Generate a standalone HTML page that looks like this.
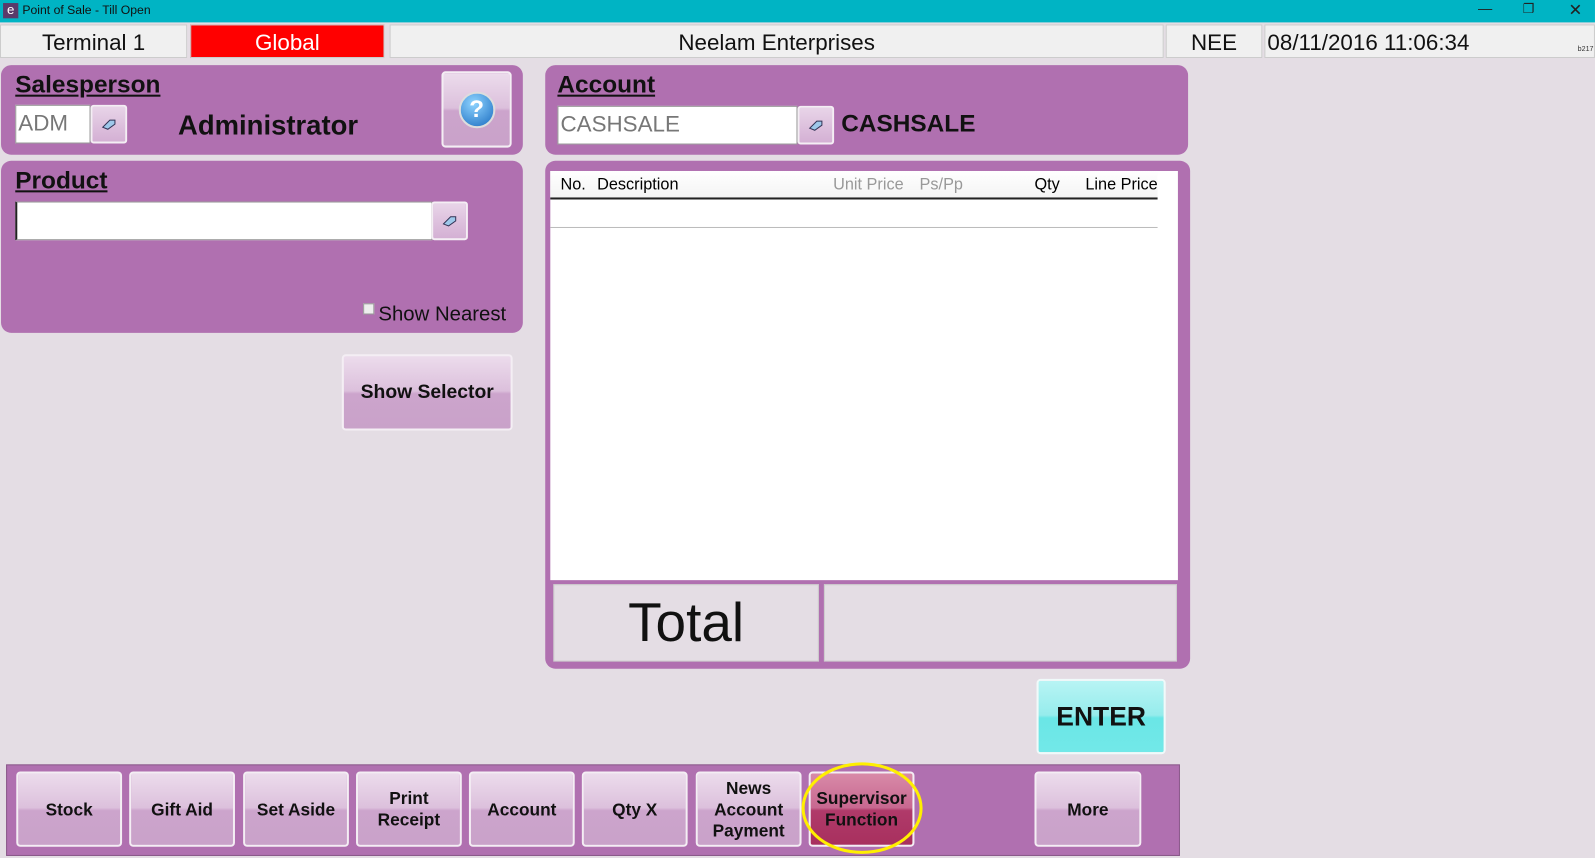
<!DOCTYPE html>
<html><head><meta charset="utf-8"><style>
*{box-sizing:border-box;margin:0;padding:0}
html,body{width:1595px;height:858px;overflow:hidden;background:#e4dde4;font-family:"Liberation Sans",sans-serif}
#w{position:absolute;left:0;top:0;width:1568px;height:843px;transform:scale(1.0172,1.0178);transform-origin:0 0}
.a{position:absolute}
.cell{position:absolute;top:24px;height:33px;background:#f0f0f0;border:1px solid #ccc;font-size:22px;line-height:33px;text-align:center;color:#111}
.pan{position:absolute;background:#b070b0;border-radius:10px}
.lbl{position:absolute;font-weight:bold;font-size:24px;text-decoration:underline;color:#111}
.btn{position:absolute;border:2px solid #f4eef4;border-radius:4px;background:linear-gradient(#ecdcec 0%,#dcc0dc 48%,#cca4cc 52%,#c9a2c9 100%);display:flex;align-items:center;justify-content:center;text-align:center;font-weight:bold;font-size:17px;color:#111;line-height:21px}
.inp{position:absolute;background:#fff;border:1px solid #999;font-size:22px;color:#777;padding-left:2px;line-height:34px}
.tag{position:absolute;width:36px;height:36px;border:2px solid #f4eef4;border-radius:3px;background:linear-gradient(#e8d4e8,#d4b0d4);display:flex;align-items:center;justify-content:center}
.hd{position:absolute;top:5px;font-size:16px}
</style></head><body><div id="w">
<div class="a" style="left:0;top:0;width:1568px;height:22px;background:#00b4c4"></div>
<div class="a" style="left:3px;top:3px;width:15px;height:15px;background:#5a3a6a;color:#fff;font-size:13px;line-height:14px;text-align:center">e</div>
<div class="a" style="left:22px;top:3px;font-size:12px;color:#111">Point of Sale - Till Open</div>
<div class="a" style="left:1453px;top:0;font-size:14px;color:#222">—</div>
<div class="a" style="left:1497px;top:1px;font-size:13px;color:#222">❐</div>
<div class="a" style="left:1542px;top:0;font-size:16px;color:#222">✕</div>
<div class="cell" style="left:0;width:184px">Terminal 1</div>
<div class="cell" style="left:187px;width:191px;background:#f00;color:#fff">Global</div>
<div class="cell" style="left:383px;width:761px">Neelam Enterprises</div>
<div class="cell" style="left:1146px;width:95px">NEE</div>
<div class="cell" style="left:1243px;width:325px;text-align:left;padding-left:2px">08/11/2016 11:06:34</div>
<div class="a" style="left:1551px;top:45px;font-size:7px;color:#333">b217</div>

<div class="pan" style="left:1px;top:64px;width:513px;height:88px"></div>
<div class="lbl" style="left:15px;top:70px">Salesperson</div>
<div class="inp" style="left:15px;top:103px;width:74px;height:38px">ADM</div>
<div class="tag" style="left:89px;top:103px;height:38px"><svg width="16" height="12"><path d="M2 9 L9 2 L14 2 L14 6 L7 11 Z" fill="#9ec8ea" stroke="#335" stroke-width="1"/></svg></div>
<div class="a" style="left:175px;top:108px;font-size:27px;font-weight:bold;color:#111">Administrator</div>
<div class="btn" style="left:434px;top:70px;width:69px;height:75px"><div style="width:36px;height:36px;border-radius:50%;background:radial-gradient(circle at 40% 30%,#8fd4ff,#1a6cc0);border:2px solid #ddd;color:#fff;font-size:24px;line-height:32px">?</div></div>

<div class="pan" style="left:1px;top:158px;width:513px;height:169px"></div>
<div class="lbl" style="left:15px;top:164px">Product</div>
<div class="inp" style="left:15px;top:198px;width:410px;height:38px;border-left:2px solid #222"></div>
<div class="tag" style="left:424px;top:198px;height:38px"><svg width="16" height="12"><path d="M2 9 L9 2 L14 2 L14 6 L7 11 Z" fill="#9ec8ea" stroke="#335" stroke-width="1"/></svg></div>
<div class="a" style="left:357px;top:298px;width:11px;height:11px;background:#eee;border:1px solid #999"></div>
<div class="a" style="left:372px;top:298px;font-size:20px;color:#111">Show Nearest</div>
<div class="btn" style="left:336px;top:348px;width:168px;height:75px;font-size:19px">Show Selector</div>

<div class="pan" style="left:536px;top:64px;width:632px;height:88px"></div>
<div class="lbl" style="left:548px;top:70px">Account</div>
<div class="inp" style="left:548px;top:104px;width:236px;height:38px">CASHSALE</div>
<div class="tag" style="left:784px;top:104px;height:38px"><svg width="16" height="12"><path d="M2 9 L9 2 L14 2 L14 6 L7 11 Z" fill="#9ec8ea" stroke="#335" stroke-width="1"/></svg></div>
<div class="a" style="left:827px;top:108px;font-size:24px;font-weight:bold;color:#111">CASHSALE</div>

<div class="pan" style="left:536px;top:158px;width:634px;height:499px"></div>
<div class="a" style="left:541px;top:168px;width:617px;height:402px;background:#fff"></div>
<div class="a" style="left:541px;top:168px;width:597px;height:28px;border-bottom:2px solid #222;background:linear-gradient(#fff,#f4f4f4)"></div>
<div class="hd" style="left:551px;top:173px">No.</div>
<div class="hd" style="left:587px;top:173px">Description</div>
<div class="hd" style="left:819px;top:173px;color:#999">Unit Price</div>
<div class="hd" style="left:904px;top:173px;color:#999">Ps/Pp</div>
<div class="hd" style="left:1017px;top:173px">Qty</div>
<div class="hd" style="left:1067px;top:173px">Line Price</div>
<div class="a" style="left:541px;top:223px;width:597px;height:1px;background:#bbb"></div>
<div class="a" style="left:544px;top:574px;width:261px;height:76px;background:#e4dde4;border:1px solid #ccc;font-size:54px;text-align:center;line-height:74px;color:#111">Total</div>
<div class="a" style="left:810px;top:574px;width:347px;height:76px;background:#e4dde4;border:1px solid #ccc"></div>

<div class="a" style="left:1019px;top:667px;width:127px;height:74px;border:2px solid #f0fafa;border-radius:4px;background:linear-gradient(#b8f4f4 0%,#96ecec 48%,#6ae6e6 52%,#72e8e8 100%);font-size:26px;font-weight:bold;text-align:center;line-height:70px;color:#111">ENTER</div>

<div class="a" style="left:6px;top:751px;width:1154px;height:90px;background:#b070b0;border:1px solid #8a5a8a"></div>
<div class="btn" style="left:16px;top:758px;width:104px;height:74px">Stock</div>
<div class="btn" style="left:127px;top:758px;width:104px;height:74px">Gift Aid</div>
<div class="btn" style="left:239px;top:758px;width:104px;height:74px">Set Aside</div>
<div class="btn" style="left:350px;top:758px;width:104px;height:74px">Print<br>Receipt</div>
<div class="btn" style="left:461px;top:758px;width:104px;height:74px">Account</div>
<div class="btn" style="left:572px;top:758px;width:104px;height:74px">Qty X</div>
<div class="btn" style="left:684px;top:758px;width:104px;height:74px">News<br>Account<br>Payment</div>
<div class="btn" style="left:795px;top:758px;width:104px;height:74px;background:linear-gradient(#d88aa8 0%,#c86890 48%,#b03a6a 52%,#a8305e 100%)">Supervisor<br>Function</div>
<div class="a" style="left:788px;top:749px;width:119px;height:90px;border:3px solid #ffef00;border-radius:50%"></div>
<div class="btn" style="left:1017px;top:758px;width:105px;height:74px">More</div>
</div></body></html>
